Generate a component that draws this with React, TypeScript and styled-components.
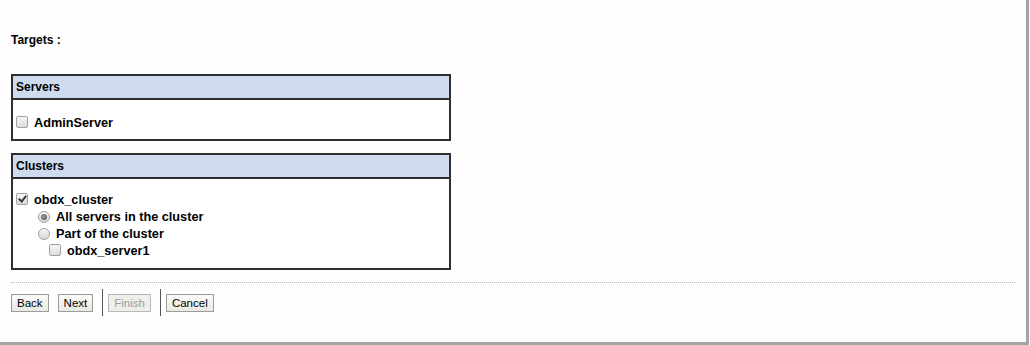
import React from 'react';
import styled, { createGlobalStyle } from 'styled-components';

const GlobalStyle = createGlobalStyle`
    html, body {
        margin:0;
        padding:0;
        background:#ffffff;
    }
    body{
        font-family:"Liberation Sans", Arial, sans-serif;
        color:#000;
    }
`;

const Frame = styled.div`
    width:1029px;
    height:345px;
    box-sizing:border-box;
    background:#fefefe;
    border-right:3px solid #a4a4a4;
    border-bottom:3px solid #a4a4a4;
    padding:33px 11px 0 11px;
`;

const Title = styled.div`
    font-size:12px;
    font-weight:bold;
    line-height:14px;
    margin-bottom:27px;
`;

const Panel = styled.div`
    width:440px;
    box-sizing:border-box;
    border:2px solid #2e2e2e;
    margin-bottom:12px;
`;

const PanelHead = styled.div`
    height:22px;
    line-height:22px;
    background:#cedbee;
    border-bottom:2px solid #2e2e2e;
    padding-left:3px;
    font-size:12px;
    font-weight:bold;
`;

const PanelBody = styled.div<{ $top: number; $bottom: number }>`
    background:#fff;
    padding:${p => p.$top}px 4px ${p => p.$bottom}px 3px;
`;

const Row = styled.label<{ $indent?: number }>`
    display:flex;
    align-items:flex-start;
    height:17px;
    line-height:17px;
    padding-left:${p => p.$indent || 0}px;
    font-size:12.7px;
    font-weight:bold;
`;

const Check = styled.input.attrs({ type: 'checkbox' })`
    appearance:none;
    -webkit-appearance:none;
    position:relative;
    width:12px;
    height:12px;
    margin:1px 6px 0 0;
    box-sizing:border-box;
    border:1px solid #a2a2a2;
    border-radius:2px;
    background:linear-gradient(#f6f6f6, #dcdcdc);
    flex-shrink:0;
    &:checked::after{
        content:'';
        position:absolute;
        left:3px;
        top:0px;
        width:3px;
        height:6px;
        border-right:2px solid #3a3a3a;
        border-bottom:2px solid #3a3a3a;
        transform:rotate(40deg);
    }
`;

const Radio = styled.input.attrs({ type: 'radio' })`
    appearance:none;
    -webkit-appearance:none;
    position:relative;
    width:12px;
    height:12px;
    margin:2px 6px 0 0;
    box-sizing:border-box;
    border:1px solid #a2a2a2;
    border-radius:50%;
    background:linear-gradient(#f6f6f6, #d8d8d8);
    flex-shrink:0;
    &:checked::after{
        content:'';
        position:absolute;
        left:2px;
        top:2px;
        width:6px;
        height:6px;
        border-radius:50%;
        background:radial-gradient(circle at 40% 40%, #9a9a9a, #4a4a4a);
    }
`;

const Divider = styled.div`
    border-top:1px dotted #b8b8b8;
    width:1004px;
`;

const ButtonBar = styled.div`
    display:flex;
    align-items:center;
    height:27px;
    margin-top:6px;
`;

const Button = styled.button<{ $gap?: number }>`
    height:18px;
    padding:0 5px;
    margin-right:${p => p.$gap ?? 9}px;
    font-family:"Liberation Sans", Arial, sans-serif;
    font-size:11.5px;
    line-height:16px;
    color:#000;
    background:linear-gradient(#fbfbf8, #e9e9e3);
    border:1px solid #9b9b9b;
    border-radius:0;
    box-sizing:border-box;
    &:disabled{
        color:#9c9c9c;
        background:#eeeeea;
        border-color:#b8b8b8;
    }
`;

const Separator = styled.div`
    width:1px;
    height:27px;
    background:#555;
    margin-right:5px;
`;

const App = () => {
    return (
        <Frame>
            <GlobalStyle />
            <Title>Targets :</Title>

            <Panel>
                <PanelHead>Servers</PanelHead>
                <PanelBody $top={15} $bottom={7}>
                    <Row><Check />AdminServer</Row>
                </PanelBody>
            </Panel>

            <Panel>
                <PanelHead>Clusters</PanelHead>
                <PanelBody $top={13} $bottom={8}>
                    <Row><Check defaultChecked />obdx_cluster</Row>
                    <Row $indent={22}><Radio name="part" defaultChecked />All servers in the cluster</Row>
                    <Row $indent={22}><Radio name="part" />Part of the cluster</Row>
                    <Row $indent={33}><Check />obdx_server1</Row>
                </PanelBody>
            </Panel>

            <Divider />
            <ButtonBar>
                <Button>Back</Button>
                <Button>Next</Button>
                <Separator />
                <Button disabled>Finish</Button>
                <Separator />
                <Button>Cancel</Button>
            </ButtonBar>
        </Frame>
    );
};

export default App;
